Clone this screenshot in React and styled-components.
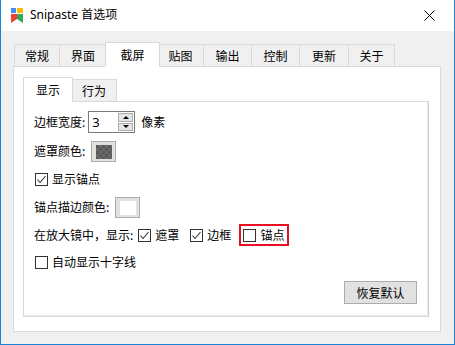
import React from 'react';
import styled, { createGlobalStyle, css } from 'styled-components';

const Global = createGlobalStyle`
  html, body { margin: 0; padding: 0; background: #fff; }
  body {
    font-family: "Noto Sans CJK SC", "Noto Sans", sans-serif;
    font-size: 12px;
    color: #000;
  }
`;

const Window = styled.div`
  width: 455px;
  height: 345px;
  box-sizing: border-box;
  border: 1px solid #1883d7;
  border-top: none;
  display: flex;
  flex-direction: column;
  background: #f0f0f0;
`;

const TitleBar = styled.div`
  height: 31px;
  flex: none;
  background: #fff;
  display: flex;
  align-items: center;
  padding: 0 10px 0 10px;
`;

const Title = styled.div`
  margin-left: 7px;
  flex: 1;
  font-family: "Noto Sans", "Noto Sans CJK SC", sans-serif;
  font-size: 12px;
  line-height: 14px;
  margin-top: -2px;
`;

const CloseBtn = styled.div`
  width: 11px;
  height: 11px;
  margin-right: 9px;
  display: flex;
`;

const Body = styled.div`
  flex: 1;
  padding: 11px 0 0 12px;
  display: flex;
  flex-direction: column;
`;

const TabBar = styled.div`
  display: flex;
  align-items: flex-end;
  height: 25px;
  margin-left: 1px;
  position: relative;
  z-index: 1;
  margin-bottom: -1px;
`;

const tabActive = css`
  height: 25px;
  background: #fff;
  border-bottom-color: #fff;
  margin-left: -2px;
  margin-right: -2px;
  position: relative;
  z-index: 2;
`;

const Tab = styled.div`
  box-sizing: border-box;
  width: ${(p) => p.$w}px;
  height: 23px;
  border: 1px solid #d9d9d9;
  margin-left: -1px;
  background: #f0f0f0;
  display: flex;
  align-items: center;
  justify-content: center;
  line-height: 14px;
  padding-top: 1px;
  &:first-child { margin-left: 0; }
  ${(p) => p.$active && tabActive}
`;

const Pane = styled.div`
  box-sizing: border-box;
  width: 428px;
  height: 266px;
  background: #fff;
  border: 1px solid #d9d9d9;
  padding: 10px 0 0 9px;
  display: flex;
  flex-direction: column;
`;

const SubTabBar = styled.div`
  display: flex;
  align-items: flex-end;
  height: 25px;
  margin-bottom: -1px;
  position: relative;
  z-index: 1;
`;

const SubTab = styled(Tab)`
  &:first-child { margin-left: 0; }
  ${(p) => p.$active && css`
    margin-left: 0;
    margin-right: -1px;
  `}
`;

const SubPane = styled.div`
  box-sizing: border-box;
  width: 406px;
  height: 216px;
  border: 1px solid #d9d9d9;
  border-right-color: #d0d0d0;
  box-shadow: inset -1px -1px 0 #ececec;
  padding: 9px 11px 12px 10px;
  display: flex;
  flex-direction: column;
  gap: 8px;
`;

const Row = styled.div`
  display: flex;
  align-items: center;
  height: ${(p) => p.$h || 20}px;
  white-space: nowrap;
  line-height: 14px;
`;

const Label = styled.span`
  margin-right: ${(p) => p.$gap ?? 6}px;
`;

const SpinBox = styled.div`
  box-sizing: border-box;
  width: 47px;
  height: 22px;
  border: 1px solid #7a7a7a;
  display: flex;
  align-items: center;
  padding: 1px 1px 1px 3px;
  margin-right: 6px;
`;

const SpinValue = styled.span`
  flex: 1;
  font-family: "Noto Sans", sans-serif;
  font-size: 13px;
`;

const SpinButtons = styled.div`
  display: flex;
  flex-direction: column;
  gap: 1px;
  height: 18px;
`;

const SpinButton = styled.div`
  box-sizing: border-box;
  width: 15px;
  height: 8.5px;
  border: 1px solid #adadad;
  background: #e5e5e5;
  display: flex;
  align-items: center;
  justify-content: center;
  &::after {
    content: '';
    border-left: 3px solid transparent;
    border-right: 3px solid transparent;
    ${(p) => (p.$down ? 'border-top: 3px solid #000;' : 'border-bottom: 3px solid #000;')}
  }
`;

const Swatch = styled.div`
  box-sizing: border-box;
  width: 25px;
  height: 21px;
  border: 1px solid #adadad;
  background: #e1e1e1;
  padding: 3px 3px 2px 4px;
  display: flex;
`;

const SwatchFill = styled.div`
  flex: 1;
  ${(p) =>
    p.$checker
      ? css`
          background-color: #5a5a5a;
          background-image:
            linear-gradient(45deg, #6a6a6a 25%, transparent 25%, transparent 75%, #6a6a6a 75%),
            linear-gradient(45deg, #6a6a6a 25%, transparent 25%, transparent 75%, #6a6a6a 75%);
          background-size: 6px 6px;
          background-position: 0 0, 3px 3px;
        `
      : css`background: #fff;`}
`;

const CheckItem = styled.label`
  display: flex;
  align-items: center;
  gap: 4px;
  margin-left: ${(p) => p.$ml || 0}px;
  ${(p) =>
    p.$mark &&
    css`
      border: 2px solid #e81123;
      height: 22px;
      box-sizing: border-box;
      padding: 0 3px 0 2px;
    `}
`;

const Box = styled.span`
  box-sizing: border-box;
  width: 13px;
  height: 13px;
  border: 1px solid #333;
  background: #fff;
  display: inline-flex;
  align-items: center;
  justify-content: center;
  flex: none;
`;

const Footer = styled.div`
  margin-top: auto;
  display: flex;
  justify-content: flex-end;
`;

const Button = styled.div`
  box-sizing: border-box;
  width: 73px;
  height: 23px;
  border: 1px solid #adadad;
  background: #e1e1e1;
  display: flex;
  align-items: center;
  justify-content: center;
  line-height: 14px;
`;

const Logo = () => (
  <svg width="12" height="15" viewBox="0 0 12 15">
    <rect x="0" y="0" width="5" height="5" fill="#4a8af4" />
    <rect x="6" y="0" width="6" height="5" fill="#fbbc05" />
    <polygon points="0,6 6,6 6,11 0,15" fill="#ea4335" />
    <polygon points="6,6 12,6 12,15 6,11" fill="#34a853" />
  </svg>
);

const CloseIcon = () => (
  <svg width="11" height="11" viewBox="0 0 11 11">
    <path d="M0.5 0.5 L10.5 10.5 M10.5 0.5 L0.5 10.5" stroke="#000" strokeWidth="1" fill="none" />
  </svg>
);

const Check = () => (
  <svg width="11" height="11" viewBox="0 0 11 11">
    <path d="M1.5 5.5 L4 8.5 L9.5 2" stroke="#333" strokeWidth="1.1" fill="none" />
  </svg>
);

const CheckBox = ({ checked, children, ml, mark }) => (
  <CheckItem $ml={ml} $mark={mark}>
    <Box>{checked && <Check />}</Box>
    <span>{children}</span>
  </CheckItem>
);

const tabs = [
  ['常规', 46],
  ['界面', 48],
  ['截屏', 55],
  ['贴图', 47],
  ['输出', 49],
  ['控制', 49],
  ['更新', 50],
  ['关于', 47],
];

export default function App() {
  return (
    <>
      <Global />
      <Window>
        <TitleBar>
          <Logo />
          <Title>Snipaste 首选项</Title>
          <CloseBtn><CloseIcon /></CloseBtn>
        </TitleBar>
        <Body>
          <TabBar>
            {tabs.map(([t, w]) => (
              <Tab key={t} $w={w} $active={t === '截屏'}>{t}</Tab>
            ))}
          </TabBar>
          <Pane>
            <SubTabBar>
              <SubTab $w={50} $active>显示</SubTab>
              <SubTab $w={46}>行为</SubTab>
            </SubTabBar>
            <SubPane>
              <Row $h={22}>
                <Label $gap={3}>边框宽度:</Label>
                <SpinBox>
                  <SpinValue>3</SpinValue>
                  <SpinButtons>
                    <SpinButton />
                    <SpinButton $down />
                  </SpinButtons>
                </SpinBox>
                <span>像素</span>
              </Row>
              <Row>
                <Label $gap={6}>遮罩颜色:</Label>
                <Swatch><SwatchFill $checker /></Swatch>
              </Row>
              <Row>
                <CheckBox checked ml={1}>显示锚点</CheckBox>
              </Row>
              <Row>
                <Label $gap={6}>锚点描边颜色:</Label>
                <Swatch><SwatchFill /></Swatch>
              </Row>
              <Row>
                <Label $gap={5}>在放大镜中，显示:</Label>
                <CheckBox checked>遮罩</CheckBox>
                <CheckBox checked ml={11}>边框</CheckBox>
                <CheckBox ml={8} mark>锚点</CheckBox>
              </Row>
              <Row $h={18}>
                <CheckBox ml={1}>自动显示十字线</CheckBox>
              </Row>
              <Footer>
                <Button>恢复默认</Button>
              </Footer>
            </SubPane>
          </Pane>
        </Body>
      </Window>
    </>
  );
}
